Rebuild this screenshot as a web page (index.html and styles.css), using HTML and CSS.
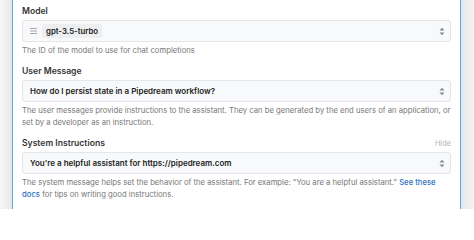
FILE: index.html
```html
<!DOCTYPE html>
<html lang="en">
<head>
<meta charset="utf-8">
<link rel="stylesheet" href="styles.css">
</head>
<body>
<div class="frame">
  <div class="gutter gutter-left"></div>
  <div class="panel">
    <div class="field">
      <div class="label-row"><span class="label">Model</span></div>
      <div class="select">
        <svg class="drag" width="7" height="6" viewBox="0 0 7 6"><path d="M0 0.5H7M0 3H7M0 5.5H7" stroke="#9aa0a6" stroke-width="0.9"/></svg>
        <span class="chip">gpt-3.5-turbo</span>
        <svg class="caret" width="6" height="9" viewBox="0 0 6 9"><path d="M0.5 3.6L3 0.8L5.5 3.6ZM0.5 5.4L3 8.2L5.5 5.4Z" fill="#888"/></svg>
      </div>
      <p class="help">The ID of the model to use for chat completions</p>
    </div>
    <div class="field">
      <div class="label-row"><span class="label">User Message</span></div>
      <div class="select">
        <span class="value">How do I persist state in a Pipedream workflow?</span>
        <svg class="caret" width="6" height="9" viewBox="0 0 6 9"><path d="M0.5 3.6L3 0.8L5.5 3.6ZM0.5 5.4L3 8.2L5.5 5.4Z" fill="#888"/></svg>
      </div>
      <p class="help">The user messages provide instructions to the assistant. They can be generated by the end users of an application, or set by a developer as an instruction.</p>
    </div>
    <div class="field">
      <div class="label-row"><span class="label">System Instructions</span><span class="hide">Hide</span></div>
      <div class="select">
        <span class="value">You're a helpful assistant for https://pipedream.com</span>
        <svg class="caret" width="6" height="9" viewBox="0 0 6 9"><path d="M0.5 3.6L3 0.8L5.5 3.6ZM0.5 5.4L3 8.2L5.5 5.4Z" fill="#888"/></svg>
      </div>
      <p class="help">The system message helps set the behavior of the assistant. For example: "You are a helpful assistant." <a href="#">See these docs</a> for tips on writing good instructions.</p>
    </div>
  </div>
  <div class="gutter gutter-right"></div>
</div>
</body>
</html>
```
FILE: styles.css
```css
* { box-sizing: border-box; }
html, body { margin: 0; padding: 0; }
body {
  width: 474px;
  height: 209px;
  overflow: hidden;
  font-family: Inter, "Noto Sans", sans-serif;
  background: #fff;
}
.frame {
  display: flex;
  height: 209px;
}
.gutter { flex: none; }
.gutter-left {
  width: 12px;
  background: linear-gradient(to right, #f6f6f6, #e8e8e8);
}
.gutter-right {
  width: 13px;
  background: linear-gradient(to right, #e6e6e6, #f4f4f4);
}
.panel {
  flex: 1;
  border-left: 1px solid #5aa6e6;
  border-right: 1px solid #5aa6e6;
  background: #fff;
  padding: 3px 9px 0 9px;
  display: flex;
  flex-direction: column;
}
.field { display: flex; flex-direction: column; }
.label-row {
  display: flex;
  justify-content: space-between;
  align-items: center;
  height: 16px;
  margin-bottom: 1px;
}
.label {
  font-size: 8.6px;
  font-weight: 600;
  color: #333;
}
.hide {
  font-size: 7.4px;
  color: #b5b5b5;
  margin-right: 0;
}
.select {
  display: flex;
  align-items: center;
  height: 22px;
  border: 1px solid #e3e5e8;
  border-radius: 3px;
  background: #f8f9fa;
  padding: 0 5px 0 7px;
}
.drag { margin-right: 5px; }
.chip {
  background: #edeef0;
  border-radius: 3px;
  padding: 2px 4px;
  font-size: 7.8px;
  font-weight: 600;
  color: #222;
}
.value {
  font-size: 8px;
  font-weight: 600;
  color: #222;
}
.caret { margin-left: auto; }
.help {
  margin: 3px 0 6px 0;
  font-size: 7.7px;
  line-height: 12px;
  color: #777;
}
.help a {
  color: #2f6fbf;
  text-decoration: none;
  font-weight: 500;
}
```
